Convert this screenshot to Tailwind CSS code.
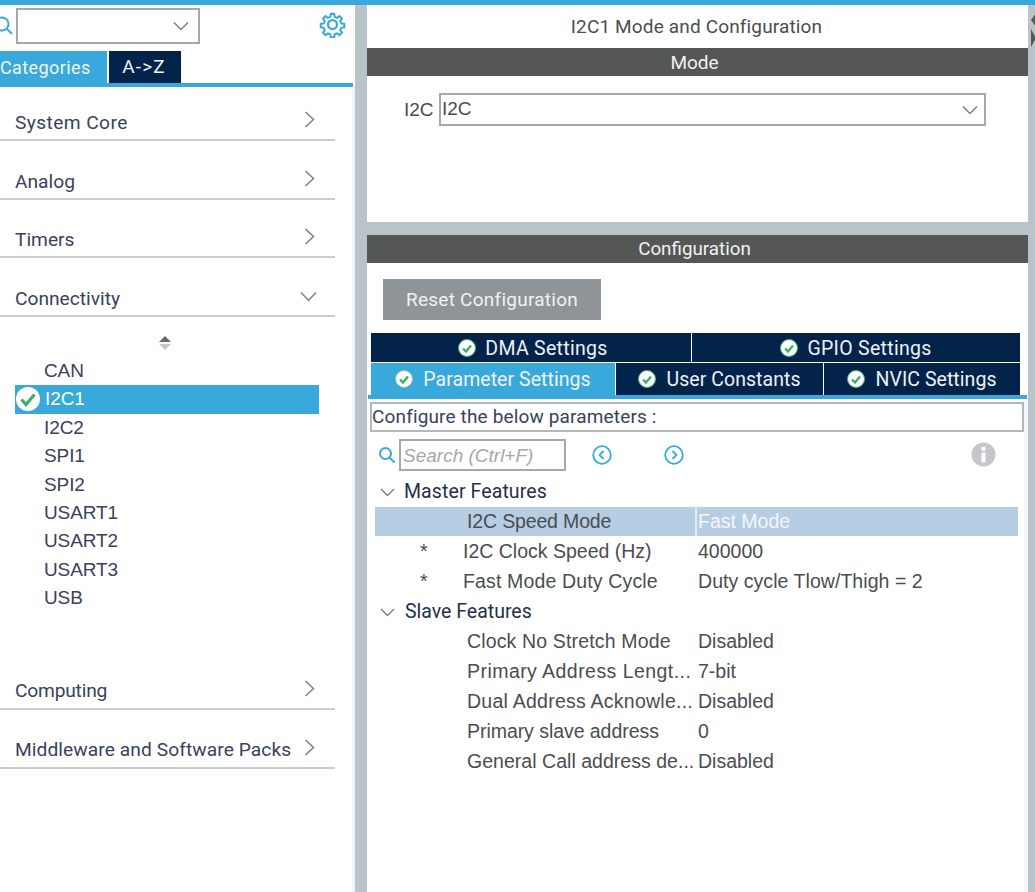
<!DOCTYPE html>
<html lang="en">
<head>
<meta charset="UTF-8">
<title>I2C1 Mode and Configuration</title>
<script src="https://cdn.jsdelivr.net/npm/@tailwindcss/browser@4"></script>
</head>
<body class="bg-white font-['Roboto',sans-serif] text-[#39415c] overflow-hidden">
<div class="w-[1035px] h-[892px] flex flex-col overflow-hidden">
  <div class="h-[5px] shrink-0 bg-[#39a9dc]"></div>
  <div class="flex flex-1 min-h-0">

    <!-- left pane -->
    <div class="w-[355px] shrink-0 flex flex-col">
      <div class="h-[46px] flex items-center relative shrink-0">
        <svg class="w-[13px] h-[20px] mt-[-4px] shrink-0" viewBox="0 0 13 20" fill="none" stroke="#39a9dc" stroke-width="2"><circle cx="2" cy="8" r="6.5"/><path d="M6.5 12.5l5.5 5.5"/></svg>
        <div class="ml-[3px] w-[184px] h-[36px] border-2 border-[#a5a9ab] flex items-center justify-end pr-[9px] mt-[-4px]">
          <svg width="16" height="10" viewBox="0 0 16 10" fill="none" stroke="#7c8083" stroke-width="1.5"><path d="M1 1.5l7 7 7-7"/></svg>
        </div>
        <svg class="absolute left-[319px] top-[6px] w-[27px] h-[27px]" viewBox="0 0 24 24" fill="none" stroke="#39a9dc" stroke-width="2"><circle cx="12" cy="12" r="4"/><path d="M10.3 1.5h3.4l.5 3 2.3 1 2.5-1.8 2.4 2.4-1.8 2.5 1 2.3 3 .5v3.4l-3 .5-1 2.3 1.8 2.5-2.4 2.4-2.5-1.8-2.3 1-.5 3h-3.4l-.5-3-2.3-1-2.5 1.8-2.4-2.4 1.8-2.5-1-2.3-3-.5v-3.4l3-.5 1-2.3-1.8-2.5 2.4-2.4 2.5 1.8 2.3-1z" transform="translate(1.2 1.2) scale(.9)"/></svg>
      </div>
      <div class="h-[32px] flex shrink-0 text-[18px] text-[#f0f4f7]">
        <div class="w-[108px] bg-[#39a9dc] border-r border-white flex items-center overflow-hidden tracking-[0.4px]">Categories</div>
        <div class="ml-px w-[72px] bg-[#03234b] flex items-center justify-center pr-[2px] tracking-[1.1px] text-[19px]">A-&gt;Z</div>
      </div>
      <div class="h-[4px] shrink-0 bg-[#39a9dc] mr-[2px]"></div>

      <div class="flex-1 border-r-[3px] border-[#f1f3f4] text-[19.2px]">
        <div class="h-[54px] mr-[17px] border-b-2 border-[#c5cdd2] flex items-end justify-between pl-[15px] pr-[20px] pb-px"><span class="tracking-[0.4px]">System Core</span><svg class="mb-[10px]" width="11" height="17" viewBox="0 0 11 17" fill="none" stroke="#7c8083" stroke-width="1.5"><path d="M1.5 1l8 7.5-8 7.5"/></svg></div>
        <div class="h-[59px] mr-[17px] border-b-2 border-[#c5cdd2] flex items-end justify-between pl-[15px] pr-[20px] pb-px"><span>Analog</span><svg class="mb-[10px]" width="11" height="17" viewBox="0 0 11 17" fill="none" stroke="#7c8083" stroke-width="1.5"><path d="M1.5 1l8 7.5-8 7.5"/></svg></div>
        <div class="h-[58px] mr-[17px] border-b-2 border-[#c5cdd2] flex items-end justify-between pl-[15px] pr-[20px] pb-px"><span>Timers</span><svg class="mb-[10px]" width="11" height="17" viewBox="0 0 11 17" fill="none" stroke="#7c8083" stroke-width="1.5"><path d="M1.5 1l8 7.5-8 7.5"/></svg></div>
        <div class="h-[59px] mr-[17px] border-b-2 border-[#c5cdd2] flex items-end justify-between pl-[15px] pr-[18px] pb-px"><span>Connectivity</span><svg class="mb-[12px]" width="17" height="11" viewBox="0 0 17 11" fill="none" stroke="#7c8083" stroke-width="1.5"><path d="M1 1.5l7.5 8 7.5-8"/></svg></div>

        <div class="h-[37px] flex flex-col items-center justify-end pb-[4px] pr-[5px] gap-[2px] mr-[17px]">
          <div class="w-0 h-0 border-x-[6px] border-x-transparent border-b-[6px] border-b-[#666a6c]"></div>
          <div class="w-0 h-0 border-x-[6px] border-x-transparent border-t-[6px] border-t-[#c4c7c9]"></div>
        </div>
        <div class="pl-[15px] w-[319px] text-[19px] mt-[3px] font-['Liberation_Sans',sans-serif] tracking-[-0.1px]">
          <div class="h-[28.4px] pl-[29px] flex items-center">CAN</div>
          <div class="h-[28.4px] pl-[30px] flex items-center bg-[#39a9dc] text-white relative">
            <svg class="absolute left-[1px] top-[2px]" width="24" height="24" viewBox="0 0 24 24"><circle cx="12" cy="12" r="12" fill="#fff"/><path d="M5.5 12.5l4.5 5 8.5-10" fill="none" stroke="#3fae6b" stroke-width="3.2"/></svg>
            I2C1
          </div>
          <div class="h-[28.4px] pl-[29px] flex items-center">I2C2</div>
          <div class="h-[28.4px] pl-[29px] flex items-center">SPI1</div>
          <div class="h-[28.4px] pl-[29px] flex items-center">SPI2</div>
          <div class="h-[28.4px] pl-[29px] flex items-center">USART1</div>
          <div class="h-[28.4px] pl-[29px] flex items-center">USART2</div>
          <div class="h-[28.4px] pl-[29px] flex items-center">USART3</div>
          <div class="h-[28.4px] pl-[29px] flex items-center">USB</div>
        </div>
        <div class="h-[97px] mr-[17px] border-b-2 border-[#c5cdd2] flex items-end justify-between pl-[15px] pr-[20px] pb-[2px]"><span class="tracking-[-0.2px]">Computing</span><svg class="mb-[9px]" width="11" height="17" viewBox="0 0 11 17" fill="none" stroke="#7c8083" stroke-width="1.5"><path d="M1.5 1l8 7.5-8 7.5"/></svg></div>
        <div class="h-[59px] mr-[17px] border-b-2 border-[#c5cdd2] flex items-end justify-between pl-[15px] pr-[20px] pb-[2px]"><span class="tracking-[0.07px]">Middleware and Software Packs</span><svg class="mb-[9px]" width="11" height="17" viewBox="0 0 11 17" fill="none" stroke="#7c8083" stroke-width="1.5"><path d="M1.5 1l8 7.5-8 7.5"/></svg></div>
      </div>
    </div>

    <!-- splitter -->
    <div class="w-[12px] shrink-0 bg-[#b9c4ca]"></div>

    <!-- right pane -->
    <div class="w-[661px] shrink-0 flex flex-col">
      <div class="h-[43px] shrink-0 flex items-center justify-center pt-[2px] pr-[2px] text-[19px] tracking-[0.15px] text-[#4a4d50]">I2C1 Mode and Configuration</div>
      <div class="h-[28px] shrink-0 bg-[#555755] flex items-center justify-center pt-[2px] pr-[6px] text-[19px] text-[#f0f2f2]">Mode</div>
      <div class="h-[146px] shrink-0 pt-[17px] pl-[37px] flex items-start text-[19px] text-[#4a4d50]">
        <span class="leading-[33px] w-[35px] font-['Liberation_Sans',sans-serif]">I2C</span>
        <div class="w-[547px] h-[33px] border-2 border-[#a5a9ab] flex items-center justify-between pl-px pr-[6px] font-['Liberation_Sans',sans-serif]">I2C
          <svg width="16" height="10" viewBox="0 0 16 10" fill="none" stroke="#7c8083" stroke-width="1.5"><path d="M1 1.5l7 7 7-7"/></svg>
        </div>
      </div>
      <div class="h-[13px] shrink-0 bg-[#b9c4ca]"></div>
      <div class="h-[28px] shrink-0 bg-[#555755] flex items-center justify-center pr-[6px] text-[18.8px] text-[#f0f2f2]">Configuration</div>

      <div class="pl-[16px] pt-[16px] shrink-0">
        <div class="w-[218px] h-[41px] bg-[#8f9497] text-[#f0f2f2] text-[19px] tracking-[0.25px] pt-[2px] flex items-center justify-center">Reset Configuration</div>
      </div>

      <div class="mt-[13px] ml-[4px] w-[649px] shrink-0 text-[19.5px] text-[#eef2f5]">
        <div class="h-[29px] flex gap-px tracking-[0.3px]">
          <div class="w-[320px] bg-[#03234b] flex items-center justify-center gap-[9px] pt-[3px] pl-[4px]">
            <svg class="mt-[-2px]" width="18" height="18" viewBox="0 0 18 18"><circle cx="9" cy="9" r="8.5" fill="#fff" stroke="#3fae6b"/><path d="M5 9.5l3 3 5-6" fill="none" stroke="#3fae6b" stroke-width="2.4"/></svg>DMA Settings</div>
          <div class="flex-1 bg-[#03234b] flex items-center justify-center gap-[9px] pt-[3px]">
            <svg class="mt-[-2px]" width="18" height="18" viewBox="0 0 18 18"><circle cx="9" cy="9" r="8.5" fill="#fff" stroke="#3fae6b"/><path d="M5 9.5l3 3 5-6" fill="none" stroke="#3fae6b" stroke-width="2.4"/></svg>GPIO Settings</div>
        </div>
        <div class="h-[32px] mt-px flex gap-px tracking-[0.05px]">
          <div class="w-[244px] bg-[#39a9dc] flex items-center justify-center gap-[10px] pt-[2px]">
            <svg class="mt-[-2px]" width="18" height="18" viewBox="0 0 18 18"><circle cx="9" cy="9" r="8.5" fill="#fff" stroke="#7fcaa0"/><path d="M5 9.5l3 3 5-6" fill="none" stroke="#3fae6b" stroke-width="2.4"/></svg>Parameter Settings</div>
          <div class="w-[207px] bg-[#03234b] flex items-center justify-center gap-[10px] pt-[2px]">
            <svg class="mt-[-2px]" width="18" height="18" viewBox="0 0 18 18"><circle cx="9" cy="9" r="8.5" fill="#fff" stroke="#3fae6b"/><path d="M5 9.5l3 3 5-6" fill="none" stroke="#3fae6b" stroke-width="2.4"/></svg>User Constants</div>
          <div class="flex-1 bg-[#03234b] flex items-center justify-center gap-[10px] pt-[2px]">
            <svg class="mt-[-2px]" width="18" height="18" viewBox="0 0 18 18"><circle cx="9" cy="9" r="8.5" fill="#fff" stroke="#3fae6b"/><path d="M5 9.5l3 3 5-6" fill="none" stroke="#3fae6b" stroke-width="2.4"/></svg>NVIC Settings</div>
        </div>
      </div>
      <div class="h-[4px] shrink-0 ml-px mr-px bg-[#39a9dc]"></div>
      <div class="border-r-[4px] border-[#f4f5f6] flex-1 min-h-0">
        <div class="mt-[3px] ml-[3px] w-[654px] h-[30px] border-2 border-[#b4b8ba] flex items-center text-[19px] tracking-[0.15px]">Configure the below parameters :</div>

        <div class="mt-[7px] h-[32px] flex items-center relative">
          <svg class="ml-[11px]" width="18" height="18" viewBox="0 0 18 18" fill="none" stroke="#39a9dc" stroke-width="2"><circle cx="7.5" cy="7.5" r="5.5"/><path d="M11.5 11.5l5 5"/></svg>
          <div class="ml-[3px] w-[167px] h-[32px] border-2 border-[#a5a9ab] flex items-center pl-[2px] pt-[2px] italic text-[19px] text-[#a5a9ab] font-['Liberation_Sans',sans-serif]">Search (Ctrl+F)</div>
          <svg class="ml-[26px]" width="20" height="20" viewBox="0 0 20 20" fill="none" stroke="#39a9dc" stroke-width="1.8"><circle cx="10" cy="10" r="8.8"/><path d="M11.5 6l-4 4 4 4"/></svg>
          <svg class="ml-[52px]" width="20" height="20" viewBox="0 0 20 20" fill="none" stroke="#39a9dc" stroke-width="1.8"><circle cx="10" cy="10" r="8.8"/><path d="M8.5 6l4 4-4 4"/></svg>
          <svg class="absolute left-[604px] top-[3px]" width="25" height="25" viewBox="0 0 25 25"><circle cx="12.5" cy="12.5" r="12" fill="#c4c7c9"/><rect x="10.5" y="10.5" width="4" height="10" fill="#fff"/><circle cx="12.5" cy="6.8" r="2.3" fill="#fff"/></svg>
        </div>

        <div class="mt-[6px] text-[19.5px] text-[#4a4d50] whitespace-nowrap font-['Liberation_Sans',sans-serif]">
          <div class="h-[30px] flex items-center pl-[13px] text-[#24304a] font-['Roboto',sans-serif]">
            <svg width="15" height="9" viewBox="0 0 15 9" fill="none" stroke="#7c8083" stroke-width="1.4"><path d="M1 1l6.5 6.5L14 1"/></svg><span class="ml-[9px] tracking-[0.1px]">Master Features</span></div>
          <div class="h-[29px] ml-[8px] w-[643px] flex bg-[#b6cde4]">
            <div class="w-[322px] border-r-2 border-white/60 pl-[92px] flex items-center tracking-[-0.15px]">I2C Speed Mode</div>
            <div class="pl-px flex items-center text-[#f4f6f8]">Fast Mode</div>
          </div>
          <div class="h-[30px] mt-px flex items-center"><span class="w-[96px] pl-[53px]">*</span><span class="w-[235px]">I2C Clock Speed (Hz)</span><span>400000</span></div>
          <div class="h-[30px] flex items-center"><span class="w-[96px] pl-[53px]">*</span><span class="w-[235px] tracking-[0.15px]">Fast Mode Duty Cycle</span><span class="tracking-[0.05px]">Duty cycle Tlow/Thigh = 2</span></div>
          <div class="h-[30px] flex items-center pl-[13px] text-[#24304a] font-['Roboto',sans-serif]">
            <svg width="15" height="9" viewBox="0 0 15 9" fill="none" stroke="#7c8083" stroke-width="1.4"><path d="M1 1l6.5 6.5L14 1"/></svg><span class="ml-[10px]">Slave Features</span></div>
          <div class="h-[30px] flex items-center pl-[100px]"><span class="w-[231px] tracking-[0.15px]">Clock No Stretch Mode</span><span>Disabled</span></div>
          <div class="h-[30px] flex items-center pl-[100px]"><span class="w-[231px] tracking-[0.45px]">Primary Address Lengt...</span><span>7-bit</span></div>
          <div class="h-[30px] flex items-center pl-[100px]"><span class="w-[231px] tracking-[0.25px]">Dual Address Acknowle...</span><span>Disabled</span></div>
          <div class="h-[30px] flex items-center pl-[100px]"><span class="w-[231px] tracking-[-0.05px]">Primary slave address</span><span>0</span></div>
          <div class="h-[30px] flex items-center pl-[100px]"><span class="w-[231px] tracking-[0.03px]">General Call address de...</span><span>Disabled</span></div>
        </div>
      </div>
    </div>

    <!-- right splitter with collapse handle -->
    <div class="flex-1 bg-[#b9c4ca] relative">
      <div class="absolute left-[3px] top-[8px] w-0 h-0 border-y-[7px] border-y-transparent border-r-[5px] border-r-[#555755]"></div>
      <div class="absolute left-[3px] top-[24px] w-0 h-0 border-y-[9px] border-y-transparent border-l-[5px] border-l-[#555755]"></div>
    </div>
  </div>
</div>
</body>
</html>
